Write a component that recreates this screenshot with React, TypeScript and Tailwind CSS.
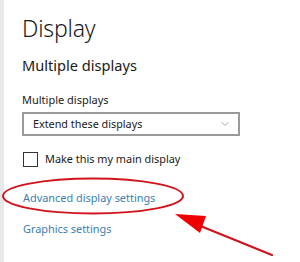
import { ChevronDown } from "lucide-react";

// ─── Page ─────────────────────────────────────────────────────────────────────

export default function App() {
  return (
    <div
      className="relative flex h-[262px] w-[300px] overflow-hidden bg-white text-[#1a1a1a]"
      style={{ fontFamily: '"Noto Sans", "Open Sans", sans-serif' }}
    >
      <div className="w-[4px] shrink-0 bg-[#e8e8e8]" />

      <main className="flex flex-1 flex-col pl-[18px] pt-[14px]">
        <h1 className="text-[23px] font-light leading-[28px] tracking-[-0.2px]">Display</h1>

        <h2 className="mt-[13px] text-[14.6px] font-normal leading-[20px]">Multiple displays</h2>

        <p className="mt-[17px] text-[11px] leading-[16px]">Multiple displays</p>

        <div className="mt-[4px] flex h-[24px] w-[218px] items-center justify-between border-2 border-[#9a9a9a] pl-[9px] pr-[7px]">
          <span className="text-[10.8px]">Extend these displays</span>
          <ChevronDown className="h-[12px] w-[12px] text-[#8a8a8a]" strokeWidth={1.5} />
        </div>

        <label className="mt-[15px] flex items-center gap-[7px] pl-px">
          <span className="h-[15px] w-[15px] border-[1.5px] border-[#333]" />
          <span className="text-[10.9px] leading-[16px]">Make this my main display</span>
        </label>

        <a className="mt-[23px] pl-px text-[10.9px] leading-[16px] text-[#3a80b3]">
          Advanced display settings
        </a>

        <a className="mt-[15px] pl-px text-[10.9px] leading-[16px] text-[#3a80b3]">
          Graphics settings
        </a>
      </main>

      {/* annotation overlay */}
      <svg
        className="pointer-events-none absolute inset-0"
        width={300}
        height={262}
        viewBox="0 0 300 262"
      >
        <ellipse cx={93} cy={196} rx={90} ry={17.5} fill="none" stroke="#d0141c" strokeWidth={2} />
        <line x1={198} y1={225} x2={272} y2={255} stroke="#d0141c" strokeWidth={2.2} strokeLinecap="round" />
        <polygon points="175,214 206,216 200,233" fill="#ee0000" />
      </svg>
    </div>
  );
}
